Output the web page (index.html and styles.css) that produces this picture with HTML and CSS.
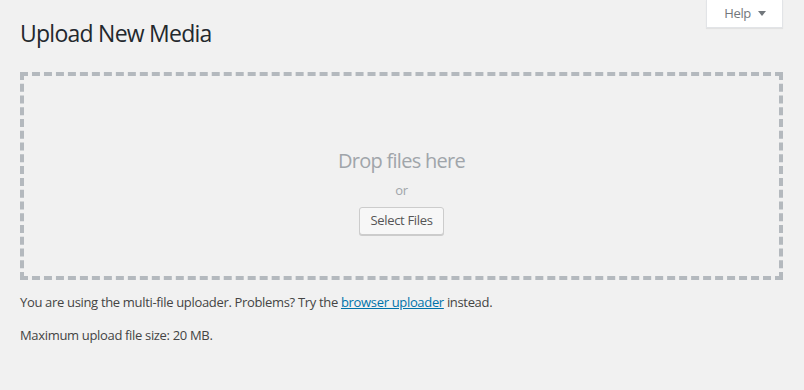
FILE: index.html
```html
<!DOCTYPE html>
<html lang="en">
<head>
<meta charset="utf-8">
<title>Upload New Media</title>
<link rel="stylesheet" href="styles.css">
</head>
<body>
<div class="content">
  <div class="screen-meta-links">
    <button class="help-tab" type="button">Help <span class="arrow"></span></button>
  </div>
  <div class="wrap">
    <h1 class="title">Upload New Media</h1>
    <div class="drag-drop-area">
      <div class="drag-drop-inside">
        <p class="drop-title">Drop files here</p>
        <p class="drop-or">or</p>
        <p class="drop-buttons"><button class="button" type="button">Select Files</button></p>
      </div>
    </div>
    <p class="note">You are using the multi-file uploader. Problems? Try the <a href="#">browser uploader</a> instead.</p>
    <p class="note max">Maximum upload file size: 20 MB.</p>
  </div>
</div>
</body>
</html>
```

FILE: styles.css
```css
html, body {
  margin: 0;
  padding: 0;
  background: #f1f1f1;
}
body {
  font-family: "Open Sans", "Noto Sans", sans-serif;
  font-size: 13px;
  line-height: 1.5;
  color: #444;
  letter-spacing: -0.33px;
}
.content {
  padding: 0 21px 0 20px;
}
.screen-meta-links {
  float: right;
}
.help-tab {
  display: flex;
  align-items: center;
  gap: 7px;
  height: 28px;
  padding: 0 16px 1px 17px;
  margin: 0;
  background: #fff;
  border: 1px solid #e2e4e7;
  border-top: none;
  box-shadow: 0 1px 1px rgba(0,0,0,.06);
  font-family: inherit;
  font-size: 13px;
  letter-spacing: -0.33px;
  color: #72777c;
  cursor: pointer;
}
.arrow {
  width: 0;
  height: 0;
  border-left: 4px solid transparent;
  border-right: 4px solid transparent;
  border-top: 5px solid #72777c;
  margin-top: 1px;
}
.wrap {
  padding-top: 10px;
}
.title {
  margin: 0;
  padding: 9px 0 4px;
  font-size: 23px;
  font-weight: 400;
  line-height: 1.3;
  letter-spacing: -0.75px;
  color: #23282d;
}
.drag-drop-area {
  margin-top: 19px;
  height: 200px;
  border: 4px dashed #b4b9be;
}
.drag-drop-inside {
  margin-top: 71px;
  display: flex;
  flex-direction: column;
  align-items: center;
}
.drag-drop-inside p {
  margin: 0;
  text-align: center;
}
.drop-title {
  font-size: 20px;
  line-height: 28px;
  letter-spacing: -0.73px;
  color: #a0a5aa;
}
.drop-or {
  margin-top: 5px !important;
  font-size: 13px;
  line-height: 20px;
  color: #a0a5aa;
}
.drop-buttons {
  margin-top: 7px !important;
}
.button {
  height: 28px;
  padding: 0 10px 1px;
  background: #f7f7f7;
  border: 1px solid #ccc;
  border-radius: 3px;
  box-shadow: 0 1px 0 #ccc;
  color: #555;
  font-family: inherit;
  font-size: 13px;
  letter-spacing: -0.33px;
  cursor: pointer;
}
.note {
  margin: 13px 0 0;
}
.note.max {
  margin-top: 14px;
}
a {
  color: #0073aa;
  text-decoration: underline;
}
```
